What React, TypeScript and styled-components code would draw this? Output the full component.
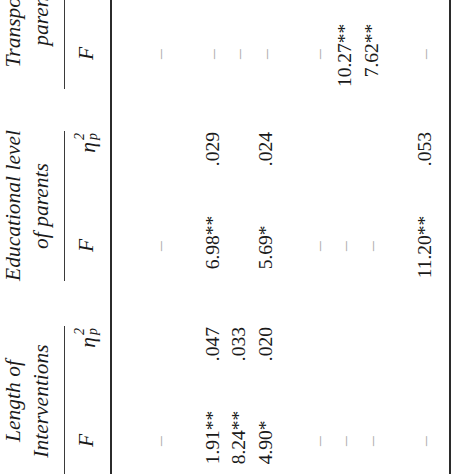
import React from "react";
import styled, { createGlobalStyle } from "styled-components";

const GlobalStyle = createGlobalStyle`
  html, body { margin: 0; padding: 0; background: #ffffff; }
  #root { width: 474px; height: 474px; }
`;

const COLS = "90px 60px 45px 90px 60px 42px 90px 60px";

const Page = styled.div`
  width: 474px;
  height: 474px;
  overflow: hidden;
  background: #ffffff;
`;

const Rotated = styled.div`
  width: 474px;
  height: 474px;
  transform: rotate(-90deg);
  transform-origin: 50% 50%;
`;

const Table = styled.div`
  display: flex;
  flex-direction: column;
  width: max-content;
  margin-left: -8px;
  margin-top: -6.5px;
  font-family: "Liberation Serif", "Times New Roman", serif;
  color: #1a1a1a;
`;

const GroupRow = styled.div`
  display: grid;
  grid-template-columns: ${COLS};
`;

const GroupHead = styled.div<{ $col: number }>`
  grid-column: ${(p) => p.$col} / span 2;
  text-align: center;
  font-style: italic;
  font-size: 21.5px;
  line-height: 27.5px;
  padding-bottom: 9px;
  border-bottom: 1px solid #3a3a3a;
  white-space: nowrap;
`;

const SubRow = styled.div`
  display: grid;
  grid-template-columns: ${COLS};
  box-sizing: border-box;
  height: 46.5px;
  padding-top: 8px;
  border-bottom: 2px solid #2b2b2b;
`;

const FHead = styled.div<{ $col: number }>`
  grid-column: ${(p) => p.$col};
  padding-left: 29px;
  font-style: italic;
  font-size: 21.5px;
  line-height: 27.5px;
`;

const EtaHead = styled.div<{ $col: number }>`
  grid-column: ${(p) => p.$col};
  text-align: right;
  padding-right: 2px;
  font-style: italic;
  font-size: 21.5px;
  line-height: 27.5px;
  white-space: nowrap;
`;

const Scripts = styled.span`
  display: inline-flex;
  flex-direction: column;
  font-size: 14px;
  line-height: 13px;
  vertical-align: 11px;
  margin-left: 2px;
`;

const Body = styled.div`
  padding: 35px 0 10.5px;
  border-bottom: 2px solid #2b2b2b;
`;

const DataRow = styled.div`
  display: grid;
  grid-template-columns: ${COLS};
  height: 26.5px;
  font-size: 19.5px;
  line-height: 26.5px;
`;

const FCell = styled.div<{ $col: number }>`
  grid-column: ${(p) => p.$col};
  padding-left: 2px;
  white-space: nowrap;
`;

const IntPart = styled.span`
  display: inline-block;
  width: 19.5px;
  text-align: right;
`;

const Dash = styled.span`
  display: inline-block;
  padding-left: 28px;
  color: #b0b0b0;
`;

const EtaCell = styled.div<{ $col: number }>`
  grid-column: ${(p) => p.$col};
  text-align: right;
  padding-right: 1px;
  white-space: nowrap;
`;

type Pair = [string, string];
type Row = { cells: [Pair, Pair, Pair] } | null;

const D = "-";

const rows: Row[] = [
  { cells: [[D, ""], [D, ""], [D, ""]] },
  null,
  { cells: [["1.91**", ".047"], ["6.98**", ".029"], [D, ""]] },
  { cells: [["8.24**", ".033"], ["", ""], [D, ""]] },
  { cells: [["4.90*", ".020"], ["5.69*", ".024"], [D, ""]] },
  null,
  { cells: [[D, ""], [D, ""], [D, ""]] },
  { cells: [[D, ""], [D, ""], ["10.27**", ""]] },
  { cells: [[D, ""], [D, ""], ["7.62**", ""]] },
  null,
  { cells: [[D, ""], ["11.20**", ".053"], [D, ""]] },
];

const groups: [string, string][] = [
  ["Length of", "Interventions"],
  ["Educational level", "of parents"],
  ["Transport of", "parents"],
];

function FValue({ value }: { value: string }) {
  if (value === D) return <Dash>–</Dash>;
  if (!value) return null;
  const dot = value.indexOf(".");
  return (
    <>
      <IntPart>{value.slice(0, dot)}</IntPart>
      {value.slice(dot)}
    </>
  );
}

function Eta() {
  return (
    <>
      η
      <Scripts>
        <span>2</span>
        <span>p</span>
      </Scripts>
    </>
  );
}

export default function App() {
  return (
    <>
      <GlobalStyle />
      <Page>
        <Rotated>
          <Table>
            <GroupRow>
              {groups.map(([a, b], i) => (
                <GroupHead key={a} $col={1 + i * 3}>
                  {a}
                  <br />
                  {b}
                </GroupHead>
              ))}
            </GroupRow>
            <SubRow>
              {groups.map((g, i) => (
                <React.Fragment key={g[0]}>
                  <FHead $col={1 + i * 3}>F</FHead>
                  <EtaHead $col={2 + i * 3}>
                    <Eta />
                  </EtaHead>
                </React.Fragment>
              ))}
            </SubRow>
            <Body>
              {rows.map((r, ri) => (
                <DataRow key={ri}>
                  {r &&
                    r.cells.map(([f, e], gi) => (
                      <React.Fragment key={gi}>
                        <FCell $col={1 + gi * 3}>
                          <FValue value={f} />
                        </FCell>
                        <EtaCell $col={2 + gi * 3}>{e}</EtaCell>
                      </React.Fragment>
                    ))}
                </DataRow>
              ))}
            </Body>
          </Table>
        </Rotated>
      </Page>
    </>
  );
}
